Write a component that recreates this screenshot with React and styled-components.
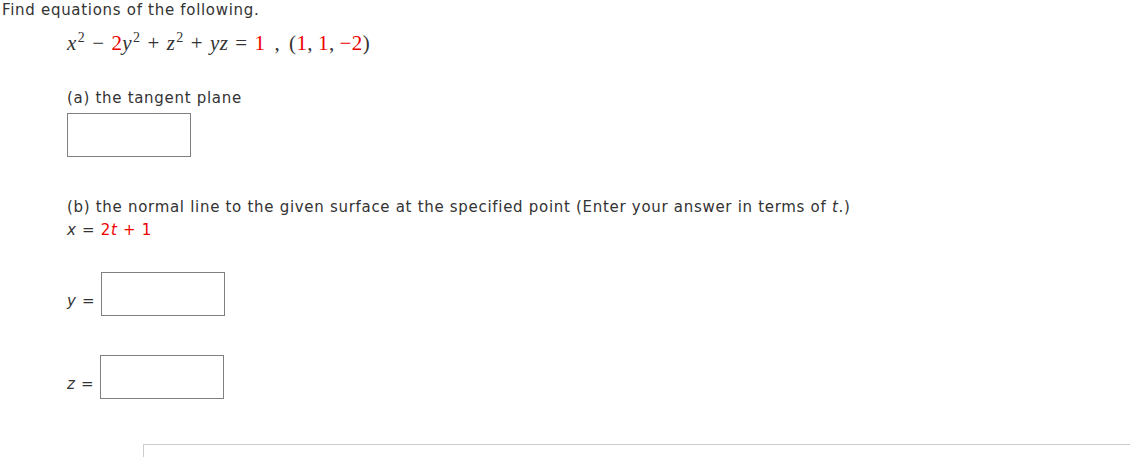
import React from "react";
import styled, { createGlobalStyle } from "styled-components";

const GlobalStyle = createGlobalStyle`
  html, body {
    margin: 0;
    padding: 0;
    background: #fff;
  }
  body {
    font-family: "DejaVu Sans", Verdana, sans-serif;
    font-size: 15px;
    letter-spacing: 0.7px;
    color: #333;
  }
`;

const Page = styled.div`
  padding: 0 0 0 2px;
`;

const Title = styled.div`
  line-height: 20px;
`;

const Question = styled.div`
  margin-left: 65px;
`;

const Equation = styled.div`
  margin-top: 11px;
  font-family: "Liberation Serif", "Times New Roman", serif;
  font-size: 21px;
  letter-spacing: 0.4px;
  line-height: 24px;
  color: #333;
  white-space: nowrap;
`;

const V = styled.i`
  font-style: italic;
`;

const Sup = styled.sup`
  font-size: 14px;
  vertical-align: 8px;
  line-height: 0;
  margin-left: 1px;
`;

const Red = styled.span`
  color: #e00;
`;

const Op = styled.span`
  margin: 0 ${(p) => p.$space || 7}px;
`;

const Comma = styled.span`
  margin: 0 ${(p) => p.$right || 5}px 0 ${(p) => p.$left || 0}px;
`;

const Line = styled.div`
  line-height: 20px;
  margin-top: ${(p) => p.$top || 0}px;
`;

const AnswerBox = styled.input`
  display: block;
  box-sizing: border-box;
  width: 124px;
  height: 44px;
  margin: ${(p) => p.$top || 0}px 0 0 0;
  border: 1px solid #808080;
  padding: 0 4px;
  font: inherit;
  outline: none;
`;

const Row = styled.div`
  display: flex;
  align-items: flex-end;
  margin-top: ${(p) => p.$top || 0}px;
`;

const Label = styled.span`
  line-height: 20px;
  margin-bottom: 5px;
  width: ${(p) => p.$w}px;
  flex: none;
  white-space: nowrap;
`;

const Answer = styled.span`
  color: #e00;
`;

const Footer = styled.div`
  margin: 45px 0 0 141px;
  height: 30px;
  border-top: 1px solid #ccc;
  border-left: 1px solid #ccc;
`;

export default function App() {
  return (
    <Page>
      <GlobalStyle />
      <Title>Find equations of the following.</Title>
      <Question>
        <Equation>
          <V>x</V>
          <Sup>2</Sup>
          <Op>−</Op>
          <Red>2</Red>
          <V>y</V>
          <Sup>2</Sup>
          <Op>+</Op>
          <V>z</V>
          <Sup>2</Sup>
          <Op>+</Op>
          <V>yz</V>
          <Op>=</Op>
          <Red>1</Red>
          <Comma $left={9} $right={9}>,</Comma>(<Red>1</Red>
          <Comma>,</Comma>
          <Red>1</Red>
          <Comma>,</Comma>
          <Red>−2</Red>)
        </Equation>

        <Line $top={33}>(a) the tangent plane</Line>
        <AnswerBox $top={5} />

        <Line $top={40}>
          (b) the normal line to the given surface at the specified point (Enter your
          answer in terms of <i>t</i>.)
        </Line>
        <Line $top={3}>
          <i>x</i> = <Answer>2<i>t</i> + 1</Answer>
        </Line>

        <Row $top={32}>
          <Label $w={34}>
            <i>y</i> =
          </Label>
          <AnswerBox />
        </Row>
        <Row $top={39}>
          <Label $w={33}>
            <i>z</i> =
          </Label>
          <AnswerBox />
        </Row>
      </Question>
      <Footer />
    </Page>
  );
}
